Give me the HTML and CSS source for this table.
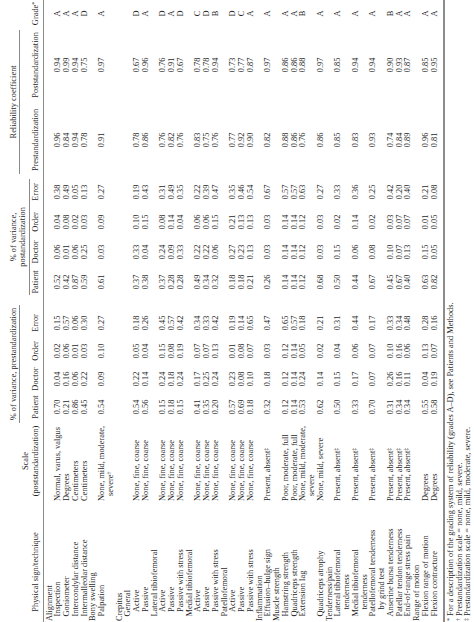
FILE: index.html
```html
<!DOCTYPE html>
<html lang="en">
<head>
<meta charset="utf-8">
<title>Reliability of physical signs of the knee</title>
<link rel="stylesheet" href="styles.css">
</head>
<body>
<div class="frame">
<div class="page">
  <table class="tbl">
    <colgroup>
      <col class="c-sign"><col class="c-scale">
      <col class="c-pre"><col class="c-pre"><col class="c-pre"><col class="c-pre-last">
      <col class="c-post"><col class="c-post"><col class="c-post"><col class="c-post">
      <col class="c-rpre"><col class="c-rpost"><col class="c-grade">
    </colgroup>
    <thead>
      <tr class="h1">
        <th rowspan="2" class="hb">Physical sign/technique</th>
        <th rowspan="2" class="hb scale-h">Scale<br>(poststandardization)</th>
        <th colspan="4" class="span pre"><div class="sp">% of variance, prestandardization</div></th>
        <th colspan="4" class="span post"><div class="sp">% of variance,<br>postandardization</div></th>
        <th colspan="2" class="span relc"><div class="sp">Reliability coefficient</div></th>
        <th rowspan="2" class="hb">Grade<sup>*</sup></th>
      </tr>
      <tr class="h2">
        <th class="hb">Patient</th><th class="hb">Doctor</th><th class="hb">Order</th><th class="hb">Error</th>
        <th class="hb">Patient</th><th class="hb">Doctor</th><th class="hb">Order</th><th class="hb">Error</th>
        <th class="hb">Prestandardization</th><th class="hb">Poststandardization</th>
      </tr>
    </thead>
    <tbody>
      <tr><td class="l0">Alignment</td></tr>
      <tr><td class="l1">Inspection</td><td class="sc">Normal, varus, valgus</td><td>0.70</td><td>0.04</td><td>0.02</td><td>0.15</td><td>0.52</td><td>0.06</td><td>0.04</td><td>0.38</td><td>0.96</td><td>0.94</td><td>A</td></tr>
      <tr><td class="l1">Goniometer</td><td class="sc">Degrees</td><td>0.21</td><td>0.16</td><td>0.06</td><td>0.57</td><td>0.42</td><td>0.01</td><td>0.08</td><td>0.49</td><td>0.84</td><td>0.99</td><td>A</td></tr>
      <tr><td class="l1">Intercondylar distance</td><td class="sc">Centimeters</td><td>0.86</td><td>0.06</td><td>0.01</td><td>0.06</td><td>0.87</td><td>0.06</td><td>0.02</td><td>0.05</td><td>0.94</td><td>0.94</td><td>A</td></tr>
      <tr><td class="l1">Intermalleolar distance</td><td class="sc">Centimeters</td><td>0.45</td><td>0.22</td><td>0.03</td><td>0.30</td><td>0.59</td><td>0.25</td><td>0.03</td><td>0.13</td><td>0.78</td><td>0.75</td><td>D</td></tr>
      <tr><td class="l0">Bony swelling</td></tr>
      <tr><td class="l1">Palpation</td><td class="sc">None, mild, moderate,<span class="cont">severe<sup>†</sup></span></td><td>0.54</td><td>0.09</td><td>0.10</td><td>0.27</td><td>0.61</td><td>0.03</td><td>0.09</td><td>0.27</td><td>0.91</td><td>0.97</td><td>A</td></tr>
      <tr><td class="l0">Crepitus</td></tr>
      <tr><td class="l1">General</td></tr>
      <tr><td class="l2">Active</td><td class="sc">None, fine, coarse</td><td>0.54</td><td>0.22</td><td>0.05</td><td>0.18</td><td>0.37</td><td>0.33</td><td>0.10</td><td>0.19</td><td>0.78</td><td>0.67</td><td>D</td></tr>
      <tr><td class="l2">Passive</td><td class="sc">None, fine, coarse</td><td>0.56</td><td>0.14</td><td>0.04</td><td>0.26</td><td>0.38</td><td>0.04</td><td>0.15</td><td>0.43</td><td>0.86</td><td>0.96</td><td>A</td></tr>
      <tr><td class="l1">Lateral tibiofemoral</td></tr>
      <tr><td class="l2">Active</td><td class="sc">None, fine, coarse</td><td>0.15</td><td>0.24</td><td>0.15</td><td>0.45</td><td>0.37</td><td>0.24</td><td>0.08</td><td>0.31</td><td>0.76</td><td>0.76</td><td>D</td></tr>
      <tr><td class="l2">Passive</td><td class="sc">None, fine, coarse</td><td>0.18</td><td>0.18</td><td>0.08</td><td>0.57</td><td>0.28</td><td>0.09</td><td>0.14</td><td>0.49</td><td>0.82</td><td>0.91</td><td>A</td></tr>
      <tr><td class="l2">Passive with stress</td><td class="sc">None, fine, coarse</td><td>0.15</td><td>0.24</td><td>0.19</td><td>0.42</td><td>0.28</td><td>0.33</td><td>0.04</td><td>0.35</td><td>0.76</td><td>0.67</td><td>D</td></tr>
      <tr><td class="l1">Medial tibiofemoral</td></tr>
      <tr><td class="l2">Active</td><td class="sc">None, fine, coarse</td><td>0.41</td><td>0.17</td><td>0.07</td><td>0.34</td><td>0.49</td><td>0.22</td><td>0.06</td><td>0.22</td><td>0.83</td><td>0.78</td><td>C</td></tr>
      <tr><td class="l2">Passive</td><td class="sc">None, fine, coarse</td><td>0.35</td><td>0.25</td><td>0.07</td><td>0.33</td><td>0.34</td><td>0.22</td><td>0.06</td><td>0.39</td><td>0.75</td><td>0.78</td><td>D</td></tr>
      <tr><td class="l2">Passive with stress</td><td class="sc">None, fine, coarse</td><td>0.20</td><td>0.24</td><td>0.13</td><td>0.42</td><td>0.32</td><td>0.06</td><td>0.15</td><td>0.47</td><td>0.76</td><td>0.94</td><td>B</td></tr>
      <tr><td class="l1">Patellofemoral</td></tr>
      <tr><td class="l2">Active</td><td class="sc">None, fine, coarse</td><td>0.57</td><td>0.23</td><td>0.01</td><td>0.19</td><td>0.18</td><td>0.27</td><td>0.21</td><td>0.35</td><td>0.77</td><td>0.73</td><td>D</td></tr>
      <tr><td class="l2">Passive</td><td class="sc">None, fine, coarse</td><td>0.69</td><td>0.08</td><td>0.08</td><td>0.14</td><td>0.18</td><td>0.23</td><td>0.13</td><td>0.46</td><td>0.92</td><td>0.77</td><td>C</td></tr>
      <tr><td class="l2">Passive with stress</td><td class="sc">None, fine, coarse</td><td>0.18</td><td>0.10</td><td>0.07</td><td>0.65</td><td>0.21</td><td>0.13</td><td>0.13</td><td>0.54</td><td>0.90</td><td>0.87</td><td>A</td></tr>
      <tr><td class="l0">Inflammation</td></tr>
      <tr><td class="l1">Effusion–bulge sign</td><td class="sc">Present, absent<sup>‡</sup></td><td>0.32</td><td>0.18</td><td>0.03</td><td>0.47</td><td>0.26</td><td>0.03</td><td>0.03</td><td>0.67</td><td>0.82</td><td>0.97</td><td>A</td></tr>
      <tr><td class="l0">Muscle strength</td></tr>
      <tr><td class="l1">Hamstring strength</td><td class="sc">Poor, moderate, full</td><td>0.12</td><td>0.12</td><td>0.12</td><td>0.65</td><td>0.14</td><td>0.14</td><td>0.14</td><td>0.57</td><td>0.88</td><td>0.86</td><td>A</td></tr>
      <tr><td class="l1">Quadriceps strength</td><td class="sc">Poor, moderate, full</td><td>0.14</td><td>0.14</td><td>0.14</td><td>0.57</td><td>0.14</td><td>0.14</td><td>0.14</td><td>0.57</td><td>0.86</td><td>0.86</td><td>A</td></tr>
      <tr><td class="l1">Extension lag</td><td class="sc">None, mild, moderate,<span class="cont">severe</span></td><td>0.53</td><td>0.24</td><td>0.05</td><td>0.18</td><td>0.12</td><td>0.12</td><td>0.12</td><td>0.63</td><td>0.76</td><td>0.88</td><td>B</td></tr>
      <tr><td class="l1">Quadriceps atrophy</td><td class="sc">None, mild, severe</td><td>0.62</td><td>0.14</td><td>0.02</td><td>0.21</td><td>0.68</td><td>0.03</td><td>0.03</td><td>0.27</td><td>0.86</td><td>0.97</td><td>A</td></tr>
      <tr><td class="l0">Tenderness/pain</td></tr>
      <tr><td class="l1">Lateral tibiofemoral<span class="cont">tenderness</span></td><td class="sc">Present, absent<sup>‡</sup></td><td>0.50</td><td>0.15</td><td>0.04</td><td>0.31</td><td>0.50</td><td>0.15</td><td>0.02</td><td>0.33</td><td>0.85</td><td>0.85</td><td>A</td></tr>
      <tr><td class="l1">Medial tibiofemoral<span class="cont">tenderness</span></td><td class="sc">Present, absent<sup>‡</sup></td><td>0.33</td><td>0.17</td><td>0.06</td><td>0.44</td><td>0.44</td><td>0.06</td><td>0.14</td><td>0.36</td><td>0.83</td><td>0.94</td><td>A</td></tr>
      <tr><td class="l1">Patellofemoral tenderness<span class="cont">by grind test</span></td><td class="sc">Present, absent<sup>‡</sup></td><td>0.70</td><td>0.07</td><td>0.07</td><td>0.17</td><td>0.67</td><td>0.08</td><td>0.02</td><td>0.25</td><td>0.93</td><td>0.94</td><td>A</td></tr>
      <tr><td class="l1">Anserine bursa tenderness</td><td class="sc">Present, absent<sup>‡</sup></td><td>0.31</td><td>0.26</td><td>0.10</td><td>0.33</td><td>0.45</td><td>0.10</td><td>0.03</td><td>0.42</td><td>0.74</td><td>0.90</td><td>B</td></tr>
      <tr><td class="l1">Patellar tendon tenderness</td><td class="sc">Present, absent<sup>‡</sup></td><td>0.34</td><td>0.16</td><td>0.16</td><td>0.34</td><td>0.67</td><td>0.07</td><td>0.07</td><td>0.20</td><td>0.84</td><td>0.93</td><td>A</td></tr>
      <tr><td class="l1">End-of-range stress pain</td><td class="sc">Present, absent<sup>‡</sup></td><td>0.34</td><td>0.11</td><td>0.06</td><td>0.48</td><td>0.40</td><td>0.13</td><td>0.07</td><td>0.40</td><td>0.89</td><td>0.87</td><td>A</td></tr>
      <tr><td class="l0">Range of motion</td></tr>
      <tr><td class="l1">Flexion range of motion</td><td class="sc">Degrees</td><td>0.55</td><td>0.04</td><td>0.13</td><td>0.28</td><td>0.63</td><td>0.15</td><td>0.01</td><td>0.21</td><td>0.96</td><td>0.85</td><td>A</td></tr>
      <tr><td class="l1">Flexion contracture</td><td class="sc">Degrees</td><td>0.58</td><td>0.19</td><td>0.07</td><td>0.16</td><td>0.82</td><td>0.05</td><td>0.05</td><td>0.08</td><td>0.81</td><td>0.95</td><td>A</td></tr>
    </tbody>
  </table>
  <div class="notes">
    <p><sup>*</sup> For a description of the grading system of reliability (grades A–D), see Patients and Methods.</p>
    <p><sup>†</sup> Prestandardization scale = none, mild, severe.</p>
    <p><sup>‡</sup> Prestandardization scale = none, mild, moderate, severe.</p>
  </div>
</div>
</div>
</body>
</html>
```

FILE: styles.css
```css
html, body {
  margin: 0;
  padding: 0;
  overflow: hidden;
  background: #ffffff;
}

/* viewport-sized sheet that holds the turned page */
.frame {
  width: 474px;
  height: 622px;
  overflow: hidden;
}

/* The printed page is turned a quarter turn counter-clockwise */
.page {
  width: 622px;
  height: 474px;
  box-sizing: border-box;
  padding-top: 8.5px;
  transform-origin: 0 0;
  transform: translateY(622px) rotate(-90deg);
  font-family: "Liberation Serif", "Times New Roman", serif;
  font-size: 8.4px;
  line-height: 8.75px;
  color: #1f1f1f;
}

.tbl {
  width: 622px;
  table-layout: fixed;
  border-collapse: separate;
  border-spacing: 0;
  font-size: inherit;
}

.c-sign { width: 100px; }
.c-scale { width: 101px; }
.c-pre { width: 28px; }
.c-pre-last { width: 40px; }
.c-post { width: 30px; }
.c-rpre { width: 74px; }
.c-rpost { width: 76px; }
.c-grade { width: 27px; }

.tbl th,
.tbl td {
  padding: 0;
  font-weight: normal;
  white-space: nowrap;
}

/* header */
.tbl thead th {
  line-height: 9.5px;
  text-align: center;
  vertical-align: bottom;
}

.tbl .h1 .span {
  vertical-align: top;
}

.sp {
  border-bottom: 1px solid #8a8a8a;
  padding-bottom: 1px;
}

.span.pre .sp { margin: 0 8px 0 -2px; }
.span.post .sp { margin: 0 2px; }
.span.relc .sp { margin: 0 3px; }

.tbl .h2 th {
  padding-top: 1px;
}

.tbl thead .hb {
  padding-bottom: 2.5px;
  border-bottom: 1px solid #8a8a8a;
}

.tbl thead .scale-h {
  padding-left: 21px;
}

/* gap after the prestandardization block */
.tbl .h2 th:nth-child(4),
.tbl tbody td:nth-child(6) {
  padding-right: 12px;
}

/* body */
.tbl tbody td {
  vertical-align: top;
  text-align: center;
  line-height: 8.75px;
}

.tbl tbody tr:first-child td {
  padding-top: 2px;
}

.tbl tbody tr:last-child td {
  padding-bottom: 3.5px;
  border-bottom: 2px solid #8c8c8c;
}

.tbl td.l0 { text-align: left; padding-left: 1px; }
.tbl td.l1 { text-align: left; padding-left: 5.5px; }
.tbl td.l2 { text-align: left; padding-left: 10px; }
.tbl td.sc { text-align: left; padding-left: 21px; }

.cont {
  display: block;
  padding-left: 7px;
}

.sc .cont {
  padding-left: 5px;
}

sup {
  font-size: 0.72em;
  line-height: 0;
  vertical-align: 0.4em;
}

/* footnotes */
.notes {
  margin-top: 2.5px;
  padding-left: 1px;
  line-height: 8.5px;
}

.notes p {
  margin: 0;
  white-space: nowrap;
}
```
